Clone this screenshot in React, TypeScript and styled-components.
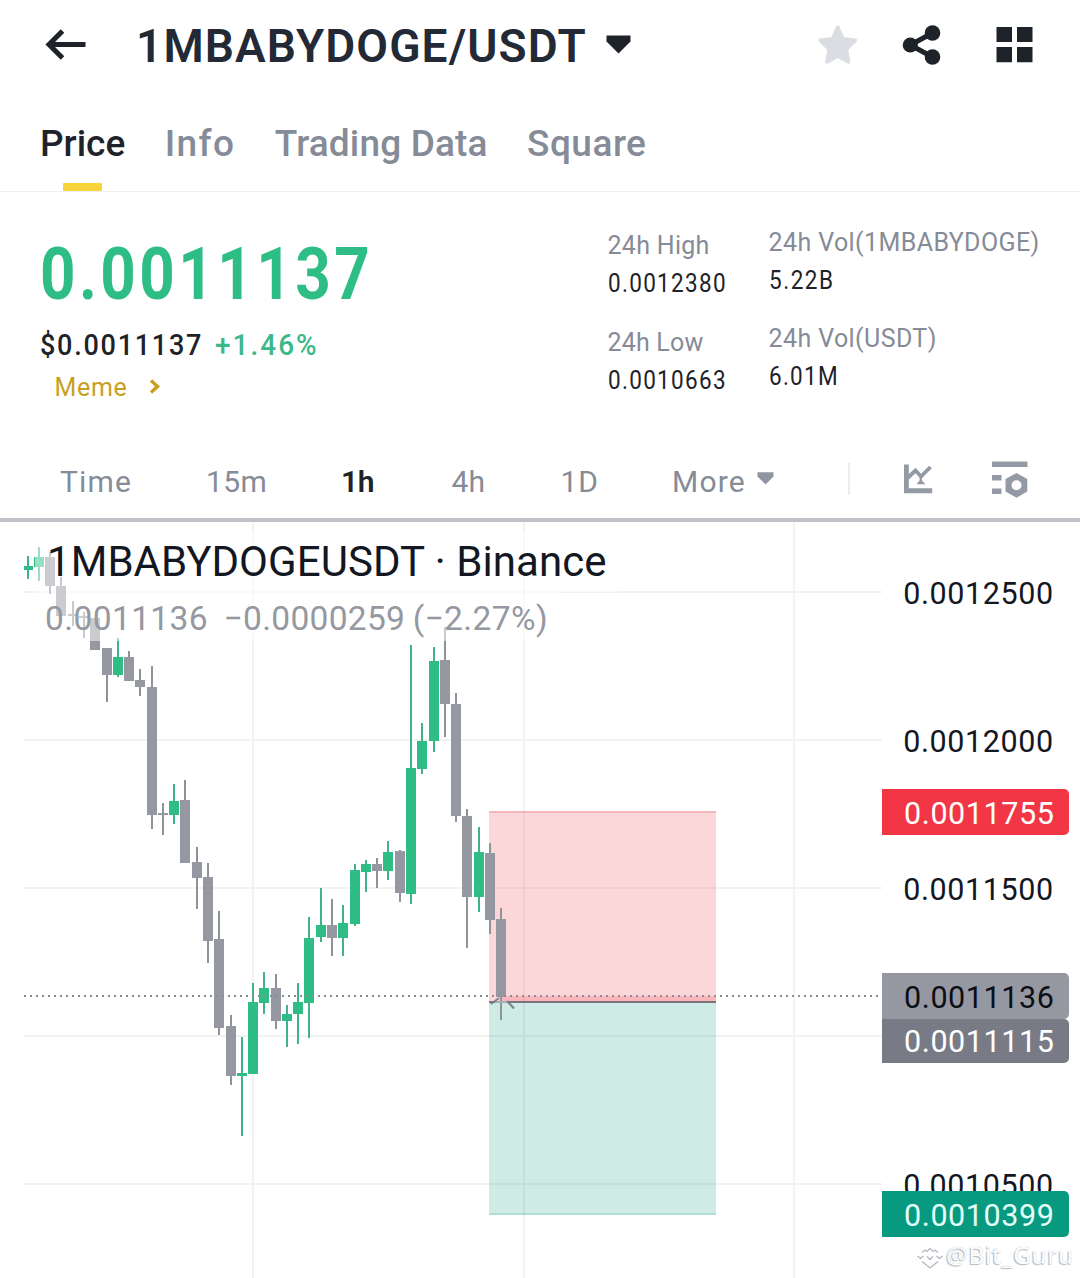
import React from "react";
import styled, { createGlobalStyle } from "styled-components";

const INK = "#1e2329";
const MUTED = "#858b97";
const UP = "#2ebd85";
const DOWN = "#9598a1";

const GlobalStyle = createGlobalStyle`
  * { box-sizing: border-box; }
  body {
    margin: 0;
    background: #ffffff;
    font-family: Roboto, "Liberation Sans", sans-serif;
  }
`;

const Screen = styled.main`
  position: relative;
  display: flex;
  flex-direction: column;
  width: 1080px;
  height: 1278px;
  overflow: hidden;
  background: #ffffff;
`;

const Text = styled.span<{
  $size: number;
  $lh?: number;
  $weight?: number;
  $color?: string;
  $ls?: number;
}>`
  font-size: ${(p) => p.$size}px;
  line-height: ${(p) => (p.$lh ? `${p.$lh}px` : "1.2")};
  font-weight: ${(p) => p.$weight ?? 400};
  color: ${(p) => p.$color ?? INK};
  letter-spacing: ${(p) => p.$ls ?? 0}px;
  white-space: nowrap;
`;

/* Narrow figures, as in a DIN face */
const Figures = styled(Text)<{ $narrow: number }>`
  transform: scaleX(${(p) => p.$narrow});
  transform-origin: left center;
`;

/* ---------- header ---------- */

const Header = styled.header`
  display: flex;
  align-items: center;
  height: 90px;
  padding: 0 46px 0 45px;
  svg { display: block; flex: none; }
`;

const PairButton = styled.div`
  display: flex;
  align-items: center;
  gap: 19px;
  margin-left: 49px;
  svg { margin-top: -2px; }
`;

const PairName = styled(Text)`
  padding-top: 2px;
`;

const HeaderActions = styled.div`
  display: flex;
  align-items: center;
  gap: 42px;
  margin-left: auto;
`;

/* ---------- tabs ---------- */

const Tabs = styled.nav`
  display: flex;
  gap: 39.4px;
  height: 102px;
  padding-left: 40px;
  border-bottom: 1px solid #eceef0;
`;

const Tab = styled.div`
  display: flex;
  flex-direction: column;
  align-items: center;
  justify-content: space-between;
  padding-top: 31px;
`;

const TabMarker = styled.i`
  width: 39px;
  height: 8px;
  border-radius: 1px;
  background: #f8d33a;
`;

/* ---------- ticker ---------- */

const Ticker = styled.section`
  display: flex;
  height: 252px;
`;

const PriceColumn = styled.div`
  display: flex;
  flex-direction: column;
  align-items: flex-start;
  width: 607.5px;
  padding: 47px 0 0 40px;
`;

const QuoteRow = styled.div`
  display: flex;
  margin-top: 16px;
`;

const Change = styled(Figures)`
  margin-left: -6px;
`;

const CategoryLink = styled.div`
  display: flex;
  align-items: center;
  gap: 21px;
  margin-top: 10px;
  padding-left: 14.5px;
  svg { margin-top: -2px; }
`;

const StatColumn = styled.div<{ $top: number; $width?: number; $gap: number; $inner: number }>`
  display: flex;
  flex-direction: column;
  gap: ${(p) => p.$gap}px;
  width: ${(p) => (p.$width ? `${p.$width}px` : "auto")};
  padding-top: ${(p) => p.$top}px;
  > div {
    display: flex;
    flex-direction: column;
    gap: ${(p) => p.$inner}px;
  }
`;

/* ---------- intervals ---------- */

const IntervalBar = styled.section`
  display: grid;
  grid-template-columns: 146px 135px 110.5px 109px 111.5px 175.5px 55px 88px auto;
  align-items: center;
  height: 78px;
  padding-left: 60px;
  border-bottom: 4px solid #bfc2c6;
  svg { display: block; }
`;

const IntervalLabel = styled(Text)`
  padding-top: 1px;
`;

const MoreButton = styled.div`
  display: flex;
  align-items: center;
  gap: 11px;
  svg { margin-top: -6px; }
`;

const Divider = styled.i`
  width: 2px;
  height: 32px;
  margin-top: -4px;
  background: #eaecef;
`;

const ToolIcon = styled.div`
  margin-top: -4px;
`;

/* ---------- chart ---------- */

const ChartArea = styled.section`
  display: flex;
  height: 756px;
`;

const Plot = styled.div`
  position: relative;
  width: 882px;
  svg { display: block; }
`;

const Legend = styled.div`
  position: absolute;
  left: 45px;
  top: 15px;
  display: flex;
  flex-direction: column;
`;

const LegendTitle = styled(Text)`
  margin-left: 2px;
`;

const LegendValues = styled.div`
  display: flex;
  margin-top: 11px;
`;

const LegendValue = styled(Text)<{ $after?: number }>`
  margin-right: ${(p) => p.$after ?? 0}px;
`;

const Axis = styled.div`
  position: relative;
  width: 198px;
`;

const Tick = styled(Text)<{ $y: number }>`
  position: absolute;
  left: 21.2px;
  top: ${(p) => p.$y - 522 - 17}px;
`;

const PriceTag = styled(Text)<{ $top: number; $h: number; $bg: string }>`
  position: absolute;
  left: 0;
  top: ${(p) => p.$top - 522}px;
  width: 187px;
  height: ${(p) => p.$h}px;
  padding: 2px 0 0 22px;
  border-radius: 0 5px 5px 0;
  background: ${(p) => p.$bg};
`;

const Watermark = styled.div`
  position: absolute;
  left: 917px;
  top: 1240px;
  display: flex;
  align-items: center;
  gap: 3px;
  svg {
    display: block;
    margin-top: 4px;
    overflow: visible;
  }
`;

const WatermarkText = styled(Text)`
  font-family: "Noto Sans", Roboto, sans-serif;
  text-shadow:
    0 0 1px rgba(90, 95, 115, 0.5),
    -1px 1px 1px rgba(90, 95, 115, 0.4);
`;

/* kind, x, high, body top, body bottom, low */
type Candle = ["u" | "d", number, number, number, number, number];

const candles: Candle[] = [
  ["u", 28, 556, 566, 570, 579],
  ["u", 39, 547, 557, 567, 581],
  ["d", 50, 552, 557, 586, 594],
  ["d", 61, 577, 586, 616, 616],
  ["d", 73, 601, 614, 616, 626],
  ["d", 84, 612, 616, 618, 638],
  ["d", 95, 618, 618, 650, 650],
  ["d", 107, 648, 648, 675, 702],
  ["u", 118, 638, 657, 675, 677],
  ["d", 129, 651, 657, 681, 681],
  ["d", 140, 669, 680, 687, 696],
  ["d", 152, 666, 687, 815, 829],
  ["d", 163, 803, 813, 815, 835],
  ["u", 174, 784, 801, 815, 824],
  ["d", 185, 780, 800, 863, 863],
  ["d", 197, 847, 862, 878, 909],
  ["d", 208, 863, 877, 941, 963],
  ["d", 219, 911, 939, 1028, 1035],
  ["d", 231, 1015, 1026, 1076, 1085],
  ["u", 242, 1037, 1073, 1076, 1136],
  ["u", 253, 983, 1002, 1074, 1074],
  ["u", 264, 972, 988, 1003, 1014],
  ["d", 276, 974, 988, 1021, 1029],
  ["u", 287, 1005, 1014, 1021, 1047],
  ["u", 298, 983, 1002, 1014, 1044],
  ["u", 309, 917, 938, 1003, 1038],
  ["u", 321, 888, 925, 937, 942],
  ["d", 332, 899, 925, 938, 956],
  ["u", 343, 905, 923, 938, 956],
  ["u", 355, 864, 870, 924, 926],
  ["u", 366, 860, 864, 872, 892],
  ["d", 377, 858, 864, 871, 888],
  ["u", 388, 841, 852, 871, 880],
  ["d", 400, 850, 851, 893, 902],
  ["u", 411, 645, 768, 894, 904],
  ["u", 422, 723, 741, 769, 774],
  ["u", 434, 647, 661, 741, 752],
  ["d", 445, 627, 660, 704, 737],
  ["d", 456, 693, 704, 816, 822],
  ["d", 467, 809, 816, 897, 948],
  ["u", 479, 827, 852, 897, 912],
  ["d", 490, 843, 853, 920, 934],
  ["d", 501, 908, 919, 997, 1020],
];

const gridRows = [592, 740, 888, 1036, 1184];
const gridCols = [253, 524, 794];
const ticks: [string, number][] = [
  ["0.0012500", 593],
  ["0.0012000", 741],
  ["0.0011500", 889],
  ["0.0010500", 1185],
];

const CandleChart = () => (
  <svg width="882" height="756" viewBox="0 522 882 756" shapeRendering="crispEdges">
    {gridRows.map((y) => (
      <rect key={y} x="24" y={y - 1} width="858" height="2" fill="#f2f2f3" />
    ))}
    {gridCols.map((x) => (
      <rect key={x} x={x - 1} y="522" width="2" height="756" fill="#f2f2f3" />
    ))}
    <rect x="489" y="811" width="227" height="191" fill="#f23645" fillOpacity="0.2" />
    <rect x="489" y="811" width="227" height="1.5" fill="#e08790" fillOpacity="0.4" />
    <rect x="501" y="996" width="215" height="5" fill="#f23645" fillOpacity="0.2" />
    <rect x="489" y="1002" width="227" height="213" fill="#089981" fillOpacity="0.2" />
    <rect x="489" y="1213" width="227" height="2" fill="#089981" fillOpacity="0.15" />
    {candles.map(([kind, x, high, top, bottom, low]) => {
      const left = Math.max(24, x - 5);
      return (
        <g key={x}>
          <rect x={x - 1} y={high} width="2" height={low - high} fill={kind === "u" ? "#42b28a" : "#8f929b"} />
          <rect x={left} y={top} width={x + 5 - left} height={bottom - top} fill={kind === "u" ? UP : DOWN} />
        </g>
      );
    })}
    <rect x="35" y="532" width="582" height="60" fill="#ffffff" fillOpacity="0.5" />
    <rect x="35" y="592" width="524" height="49" fill="#ffffff" fillOpacity="0.5" />
    <rect x="489" y="1001" width="227" height="2" fill="#7c727c" />
    <path d="M24 996H880" stroke="#8a8d96" strokeWidth="2" strokeDasharray="2 4" />
    <g shapeRendering="auto" fill="none" strokeWidth="2">
      <path d="M495 1002H508" stroke="#a9adb5" />
      <path d="M491 1004L499 998M507 1001L514 1008.500" stroke="#7d8189" />
    </g>
  </svg>
);

const intervals: { label: string; ls: number; active?: boolean }[] = [
  { label: "Time", ls: 1.17 },
  { label: "15m", ls: 0.4 },
  { label: "1h", ls: -0.3, active: true },
  { label: "4h", ls: 0.14 },
  { label: "1D", ls: 0.9 },
];

const tabs: { label: string; ls: number; active?: boolean }[] = [
  { label: "Price", ls: 0, active: true },
  { label: "Info", ls: 1.4 },
  { label: "Trading Data", ls: 0.15 },
  { label: "Square", ls: 0.5 },
];

const Stat = ({ label, value, ls = 0.45, vls = 1.45 }: { label: string; value: string; ls?: number; vls?: number }) => (
  <div>
    <Text $size={25} $lh={30} $color={MUTED} $ls={ls}>{label}</Text>
    <Figures $size={25} $lh={30} $ls={vls} $narrow={0.9}>{value}</Figures>
  </div>
);

export default function App() {
  return (
    <Screen>
      <GlobalStyle />
      <Header>
        <svg width="42" height="34" viewBox="45 28 42 34" fill="none" stroke={INK} strokeWidth="5">
          <path d="M62.500 31L49 44.500L62.500 58M49 44.500H85.500" />
        </svg>
        <PairButton>
          <PairName $size={46} $lh={56} $weight={600} $color="#232a35" $ls={1.1}>1MBABYDOGE/USDT</PairName>
          <svg width="25" height="19" viewBox="0 0 25 19" fill={INK}>
            <path d="M0.500 0.500H24.500V6.500L12.500 18.500L0.500 6.500Z" />
          </svg>
        </PairButton>
        <HeaderActions>
          <svg width="41" height="42" viewBox="819 24 41 42">
            <path
              d="M837.700 27L843 38.700L855.500 40.300L846.500 49L848.500 62L837.700 56.300L827 62L829 49L820 40.300L832.500 38.700Z"
              fill="#dadde1" stroke="#dadde1" strokeWidth="3.500" strokeLinejoin="round" transform="translate(0 0)"
            />
          </svg>
          <svg width="40" height="42" viewBox="902 23.500 40 42" fill={INK}>
            <path d="M932.500 32.500L910.300 44.500L932.500 56.500" fill="none" stroke={INK} strokeWidth="5" />
            <circle cx="910.300" cy="44.500" r="7.600" />
            <circle cx="932.500" cy="32.500" r="7.800" />
            <circle cx="932.500" cy="56.500" r="7.800" />
          </svg>
          <svg width="50" height="38" viewBox="984 26 50 38" fill={INK}>
            <path d="M996.500 27H1012V42H996.500ZM1017 27H1032.500V42H1017ZM996.500 47H1012V62.300H996.500ZM1017 47H1032.500V62.300H1017Z" />
          </svg>
        </HeaderActions>
      </Header>

      <Tabs>
        {tabs.map((t) => (
          <Tab key={t.label}>
            <Text $size={37} $lh={45} $weight={500} $color={t.active ? INK : MUTED} $ls={t.ls}>{t.label}</Text>
            {t.active && <TabMarker />}
          </Tab>
        ))}
      </Tabs>

      <Ticker>
        <PriceColumn>
          <Figures $size={72} $lh={72} $weight={700} $color={UP} $ls={4} $narrow={0.86}>0.0011137</Figures>
          <QuoteRow>
            <Figures $size={30} $lh={36} $weight={500} $ls={1.95} $narrow={0.9}>$0.0011137</Figures>
            <Change $size={30} $lh={36} $weight={500} $color="#3cb98a" $ls={2.2} $narrow={0.93}>+1.46%</Change>
          </QuoteRow>
          <CategoryLink>
            <Text $size={25} $lh={30} $color="#c99f1e" $ls={0.7}>Meme</Text>
            <svg width="12" height="16" viewBox="0 0 12 16" fill="none" stroke="#c99f1e" strokeWidth="3.400">
              <path d="M2 1.500L8.500 7.500L2 13.500" />
            </svg>
          </CategoryLink>
        </PriceColumn>
        <StatColumn $top={38.5} $width={161} $gap={29} $inner={8}>
          <Stat label="24h High" value="0.0012380" ls={0.3} />
          <Stat label="24h Low" value="0.0010663" ls={0.2} />
        </StatColumn>
        <StatColumn $top={36} $gap={28.5} $inner={7.5}>
          <Stat label="24h Vol(1MBABYDOGE)" value="5.22B" vls={1.7} ls={0.4} />
          <Stat label="24h Vol(USDT)" value="6.01M" vls={1.4} ls={0.4} />
        </StatColumn>
      </Ticker>

      <IntervalBar>
        {intervals.map((i) => (
          <IntervalLabel key={i.label} $size={30} $lh={36} $weight={i.active ? 600 : 400} $color={i.active ? INK : MUTED} $ls={i.ls}>
            {i.label}
          </IntervalLabel>
        ))}
        <MoreButton>
          <IntervalLabel $size={30} $lh={36} $color={MUTED} $ls={1.2}>More</IntervalLabel>
          <svg width="17" height="13" viewBox="0 0 17 13" fill="#8f96a1">
            <path d="M0.500 0.300H16.500V4.500L8.500 12.500L0.500 4.500Z" />
          </svg>
        </MoreButton>
        <Divider />
        <ToolIcon>
          <svg width="32" height="32" viewBox="903 462.500 32 32" fill="#939aa5">
            <path d="M904 464H908.800V487.800H932.200V492.700H904Z" />
            <path d="M907.500 477.500L915.500 470L921 476L930.500 466.500" fill="none" stroke="#939aa5" strokeWidth="3.800" />
            <path d="M919.600 476H921.900V480L925.500 483.700H916.500L919.600 480Z" />
          </svg>
        </ToolIcon>
        <ToolIcon>
          <svg width="38" height="38" viewBox="991 460 38 38" fill="#939aa5">
            <path d="M992 461.500H1027.500V467H992ZM992 475H1001.500V480.500H992ZM992 488.500H1001.500V494H992Z" />
            <path fillRule="evenodd" d="M1016.500 473L1027.300 479V491.500L1016.500 497.700L1005.500 491.500V479ZM1016.500 480.300A5 5 0 1 0 1016.500 490.300A5 5 0 1 0 1016.500 480.300Z" />
          </svg>
        </ToolIcon>
      </IntervalBar>

      <ChartArea>
        <Plot>
          <CandleChart />
          <Legend>
            <LegendTitle $size={42} $lh={50} $color="#131722" $ls={0.06}>1MBABYDOGEUSDT · Binance</LegendTitle>
            <LegendValues>
              <LegendValue $size={33.5} $lh={42} $color={DOWN} $ls={0.4} $after={15.5}>0.0011136</LegendValue>
              <LegendValue $size={33.5} $lh={42} $color={DOWN} $ls={0.3} $after={7.5}>−0.0000259</LegendValue>
              <LegendValue $size={33.5} $lh={42} $color={DOWN} $ls={0.4}>(−2.27%)</LegendValue>
            </LegendValues>
          </Legend>
        </Plot>
        <Axis>
          {ticks.map(([label, y]) => (
            <Tick key={label} $size={30.5} $lh={36} $color="#131722" $ls={0.6} $y={y}>{label}</Tick>
          ))}
          <PriceTag $size={30.5} $lh={46} $ls={0.6} $color="#ffffff" $top={789} $h={46} $bg="#f23645">0.0011755</PriceTag>
          <PriceTag $size={30.5} $lh={46} $ls={0.6} $color="#0c0e15" $top={973} $h={46} $bg="#9598a1">0.0011136</PriceTag>
          <PriceTag $size={30.5} $lh={42} $ls={0.6} $color="#ffffff" $top={1019} $h={44} $bg="#787b86">0.0011115</PriceTag>
          <PriceTag $size={30.5} $lh={46} $ls={0.6} $color="#e3fff7" $top={1191} $h={46} $bg="#089981">0.0010399</PriceTag>
        </Axis>
      </ChartArea>

      <Watermark>
        <svg width="26" height="24" viewBox="0 0 26 24" fill="none" strokeLinecap="butt">
          <g stroke="#b4b7c3" strokeWidth="1.300">
            <path d="M5 7.500L8 5L10 6.500L13 3.500L16 6.500L18 5L21 7.500" />
            <path d="M5 16.500L13 23L21 16.500" />
            <path d="M0.500 11L3.500 13.500L6.500 11M10 11.500L13 14.500L16 11.500M19.500 11L22.500 13.500L25.500 11" />
          </g>
        </svg>
        <WatermarkText $size={24} $lh={30} $color="#ffffff" $ls={0.9}>@Bit_Guru</WatermarkText>
      </Watermark>
    </Screen>
  );
}
